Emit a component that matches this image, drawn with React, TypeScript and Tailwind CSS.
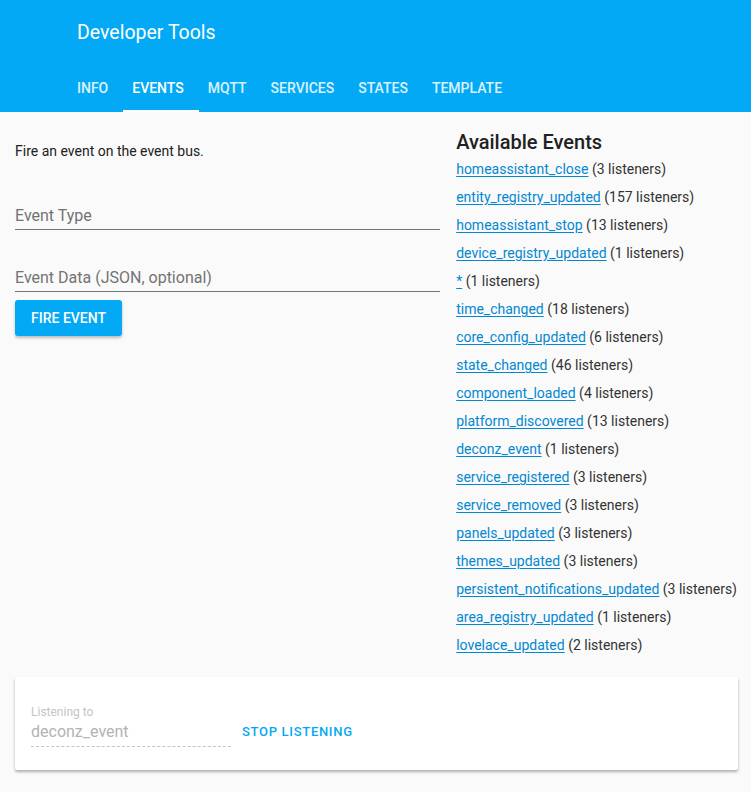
import React from "react";

const tabs = ["INFO", "EVENTS", "MQTT", "SERVICES", "STATES", "TEMPLATE"];

const events: [string, number][] = [
  ["homeassistant_close", 3],
  ["entity_registry_updated", 157],
  ["homeassistant_stop", 13],
  ["device_registry_updated", 1],
  ["*", 1],
  ["time_changed", 18],
  ["core_config_updated", 6],
  ["state_changed", 46],
  ["component_loaded", 4],
  ["platform_discovered", 13],
  ["deconz_event", 1],
  ["service_registered", 3],
  ["service_removed", 3],
  ["panels_updated", 3],
  ["themes_updated", 3],
  ["persistent_notifications_updated", 3],
  ["area_registry_updated", 1],
  ["lovelace_updated", 2],
];

export default function App() {
  return (
    <div className="min-h-[792px] w-[751px] bg-[#fafafa] font-['Roboto',_'Noto_Sans',_sans-serif] text-[#212121]">
      {/* ── Header ── */}
      <header className="h-[112px] bg-[#03a9f4] text-white">
        <div className="flex h-16 items-center pl-[77px] pt-[2px] text-[19.5px]">Developer Tools</div>
        <nav className="flex h-12 pl-[65px]">
          {tabs.map((t) => {
            const active = t === "EVENTS";
            return (
              <div
                key={t}
                className={
                  "relative flex items-center px-3 text-[14px] font-medium " +
                  (active ? "text-white" : "text-white/85")
                }
              >
                {t}
                {active && <span className="absolute bottom-0 left-[3px] right-[-3px] h-[2px] bg-white" />}
              </div>
            );
          })}
        </nav>
      </header>

      {/* ── Body ── */}
      <div className="flex pl-[15px] pr-[14px] pt-4">
        <div className="flex-1 pt-[13px]">
          <p className="text-[14px] leading-5">Fire an event on the event bus.</p>
          <div className="mt-[43px] border-b border-[#757575] pb-[1px] text-[16px] leading-6 text-[#737373]">
            Event Type
          </div>
          <div className="mt-[36px] border-b border-[#757575] pb-[1px] text-[16px] leading-6 text-[#737373]">
            Event Data (JSON, optional)
          </div>
          <button className="mt-2 h-9 rounded-[3px] bg-[#03a9f4] px-4 text-[14px] font-medium text-white shadow-[0_2px_3px_rgba(0,0,0,0.25)]">
            FIRE EVENT
          </button>
        </div>

        <div className="ml-4">
          <h2 className="text-[20px] font-medium leading-7">Available Events</h2>
          <ul className="-mt-px">
            {events.map(([name, n]) => (
              <li key={name} className="h-7 text-[14px] leading-7 whitespace-nowrap">
                <a href="#" className="text-[#0288d1] underline underline-offset-2">
                  {name}
                </a>{" "}
                <span className="text-[#333]">({n} listeners)</span>
              </li>
            ))}
          </ul>
        </div>
      </div>

      {/* ── Listening card ── */}
      <div className="ml-[15px] mr-[13px] mt-[18px] flex items-end rounded-[2px] bg-white px-4 pb-[23px] pt-[27px] shadow-[0_2px_3px_rgba(0,0,0,0.3)]">
        <div className="w-[200px] border-b border-dashed border-[#c4c4c4] pb-[2px]">
          <div className="text-[12px] leading-4 text-[#c4c4c4]">Listening to</div>
          <div className="text-[16px] leading-6 text-[#b3b3b3]">deconz_event</div>
        </div>
        <button className="mb-[3px] ml-[11px] text-[13px] font-medium leading-6 tracking-[0.7px] text-[#03a9f4]">
          STOP LISTENING
        </button>
      </div>
    </div>
  );
}
